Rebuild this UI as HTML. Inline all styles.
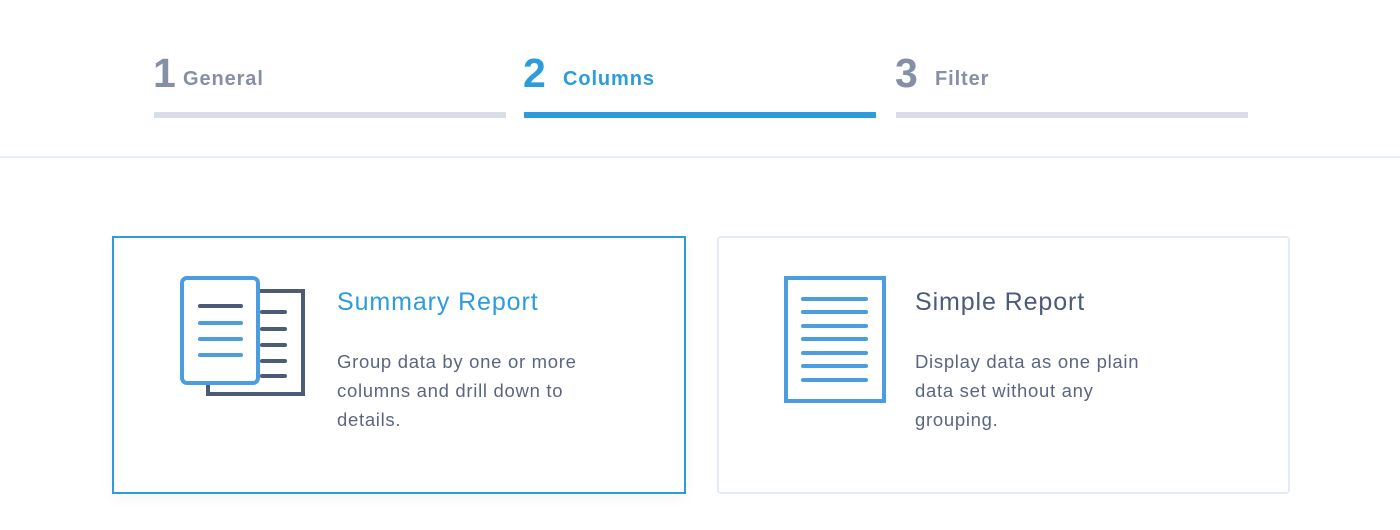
<!DOCTYPE html>
<html><head><meta charset="utf-8"><style>
*{margin:0;padding:0;box-sizing:border-box}
body{width:1400px;height:530px;background:#fff;font-family:"Liberation Sans",sans-serif;position:relative;overflow:hidden}
.step{position:absolute;top:50px;width:352px}
.step .n{position:absolute;left:-1px;top:0;font-size:41px;font-weight:bold;line-height:46px}
.step .l{position:absolute;left:39px;top:17px;font-size:20px;font-weight:bold;line-height:24px;letter-spacing:0.9px}
.step .bar{position:absolute;left:0;top:62px;width:352px;height:6px;background:#d9dde8}
.g{color:#858fa6}
.b{color:#2d9cdb}
.div{position:absolute;left:0;top:156px;width:1400px;height:2px;background:#e8eff5}
.card{position:absolute;top:236px;width:574px;height:258px;background:#fff}
.c1{left:112px;border:2px solid #2d9cdb;box-shadow:0 4px 14px rgba(0,0,0,0.04)}
.c2{left:717px;width:573px;border:2px solid #e4ecf3;border-radius:4px}
.t{position:absolute;font-size:25px;line-height:30px;letter-spacing:0.9px}
.d{position:absolute;font-size:18.5px;line-height:29px;color:#5a6680;width:285px;letter-spacing:0.7px}
svg{position:absolute}
</style></head><body>
<div class="step g" style="left:154px"><div class="n">1</div><div class="l" style="left:29px">General</div><div class="bar"></div></div>
<div class="step b" style="left:524px"><div class="n">2</div><div class="l">Columns</div><div class="bar" style="background:#2d9cdb"></div></div>
<div class="step g" style="left:896px"><div class="n">3</div><div class="l">Filter</div><div class="bar"></div></div>
<div class="div"></div>

<div class="card c1"></div>
<svg style="left:0;top:0" width="1400" height="530">
 <rect x="208" y="291" width="95" height="103" fill="none" stroke="#4c5b78" stroke-width="4"/>
 <g stroke="#4c5b78" stroke-width="4" stroke-linecap="round">
  <line x1="262" y1="312" x2="285" y2="312"/><line x1="262" y1="329" x2="285" y2="329"/>
  <line x1="262" y1="345" x2="285" y2="345"/><line x1="262" y1="361" x2="285" y2="361"/>
  <line x1="262" y1="376" x2="285" y2="376"/>
 </g>
 <rect x="182" y="278" width="76" height="105" rx="5" fill="#fff" stroke="#4a9ee0" stroke-width="4"/>
 <line x1="200" y1="306" x2="241" y2="306" stroke="#4c5b78" stroke-width="4" stroke-linecap="round"/>
 <g stroke="#4a9ee0" stroke-width="4" stroke-linecap="round">
  <line x1="200" y1="323" x2="241" y2="323"/><line x1="200" y1="339" x2="241" y2="339"/><line x1="200" y1="355" x2="241" y2="355"/>
 </g>
</svg>
<div class="t b" style="left:337px;top:287px">Summary Report</div>
<div class="d" style="left:337px;top:347px">Group data by one or more columns and drill down to details.</div>

<div class="card c2"></div>
<svg style="left:0;top:0" width="1400" height="530">
 <rect x="786" y="278" width="98" height="123" fill="#fff" stroke="#4a9ee0" stroke-width="4"/>
 <g stroke="#4a9ee0" stroke-width="4" stroke-linecap="round">
  <line x1="803" y1="299" x2="866" y2="299"/><line x1="803" y1="312" x2="866" y2="312"/>
  <line x1="803" y1="326" x2="866" y2="326"/><line x1="803" y1="339" x2="866" y2="339"/>
  <line x1="803" y1="353" x2="866" y2="353"/><line x1="803" y1="366" x2="866" y2="366"/>
  <line x1="803" y1="380" x2="866" y2="380"/>
 </g>
</svg>
<div class="t" style="left:915px;top:287px;color:#4c5b78">Simple Report</div>
<div class="d" style="left:915px;top:347px;width:265px">Display data as one plain data set without any grouping.</div>
</body></html>
